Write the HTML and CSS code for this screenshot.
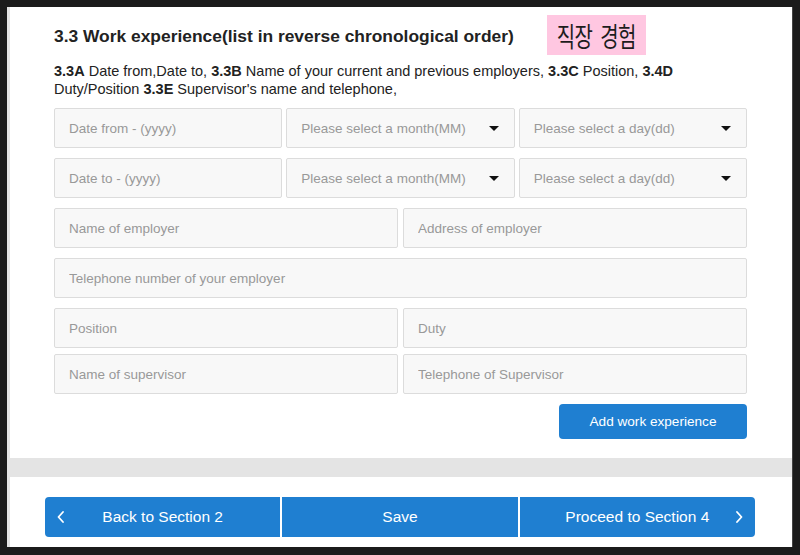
FILE: index.html
```html
<!DOCTYPE html>
<html lang="en">
<head>
<meta charset="utf-8">
<title>Work experience</title>
<link rel="stylesheet" href="styles.css">
</head>
<body>
<div class="frame">
  <div class="content">
    <div class="header">
      <h2 class="title">3.3 Work experience(list in reverse chronological order)</h2>
      <span class="tag"><span class="tag-text">직장 경험</span></span>
    </div>
    <p class="desc"><b>3.3A</b> Date from,Date to, <b>3.3B</b> Name of your current and previous employers, <b>3.3C</b> Position, <b>3.4D</b> Duty/Position <b>3.3E</b> Supervisor's name and telephone,</p>

    <div class="fields">
      <div class="row cols3">
        <input class="field" type="text" placeholder="Date from - (yyyy)">
        <div class="field select"><span>Please select a month(MM)</span><svg class="caret" viewBox="0 0 10 5" width="10" height="5"><polygon points="0,0 10,0 5,5" fill="#111"/></svg></div>
        <div class="field select"><span>Please select a day(dd)</span><svg class="caret" viewBox="0 0 10 5" width="10" height="5"><polygon points="0,0 10,0 5,5" fill="#111"/></svg></div>
      </div>
      <div class="row cols3">
        <input class="field" type="text" placeholder="Date to - (yyyy)">
        <div class="field select"><span>Please select a month(MM)</span><svg class="caret" viewBox="0 0 10 5" width="10" height="5"><polygon points="0,0 10,0 5,5" fill="#111"/></svg></div>
        <div class="field select"><span>Please select a day(dd)</span><svg class="caret" viewBox="0 0 10 5" width="10" height="5"><polygon points="0,0 10,0 5,5" fill="#111"/></svg></div>
      </div>
      <div class="row cols2">
        <input class="field" type="text" placeholder="Name of employer">
        <input class="field" type="text" placeholder="Address of employer">
      </div>
      <div class="row cols1">
        <input class="field" type="text" placeholder="Telephone number of your employer">
      </div>
      <div class="row cols2">
        <input class="field" type="text" placeholder="Position">
        <input class="field" type="text" placeholder="Duty">
      </div>
      <div class="row cols2 tight">
        <input class="field" type="text" placeholder="Name of supervisor">
        <input class="field" type="text" placeholder="Telephone of Supervisor">
      </div>
    </div>

    <div class="actions">
      <button class="btn-add" type="button">Add work experience</button>
    </div>
  </div>

  <div class="band"></div>

  <div class="footer">
    <button class="nav-btn first" type="button">
      <svg class="chev left" viewBox="0 0 7 12" width="7" height="12"><polyline points="6,1 1.5,6 6,11" fill="none" stroke="#fff" stroke-width="1.8" stroke-linecap="round" stroke-linejoin="round"/></svg>
      <span>Back to Section 2</span>
    </button>
    <button class="nav-btn" type="button"><span>Save</span></button>
    <button class="nav-btn last" type="button">
      <span>Proceed to Section 4</span>
      <svg class="chev right" viewBox="0 0 7 12" width="7" height="12"><polyline points="1,1 5.5,6 1,11" fill="none" stroke="#fff" stroke-width="1.8" stroke-linecap="round" stroke-linejoin="round"/></svg>
    </button>
  </div>
</div>
</body>
</html>
```

FILE: styles.css
```css
* { box-sizing: border-box; }

html, body {
  margin: 0;
  padding: 0;
  background: #1b1b1b;
  font-family: "Liberation Sans", Arial, sans-serif;
  color: #222;
}

.frame {
  margin: 7px 0 0 7px;
  width: 786px;
  height: 540px;
  background: #fff;
  border-left: 3px solid #e3e3e3;
  border-right: 1px solid #444;
}

.content {
  padding: 8px 45px 0 44px;
}

.header {
  display: flex;
  align-items: center;
  height: 40px;
}

.title {
  margin: 2px 0 0;
  font-size: 17.4px;
  font-weight: bold;
  color: #222;
}

.tag {
  margin-left: 33px;
  width: 99px;
  height: 40px;
  background: #ffc7e1;
  display: flex;
  align-items: center;
  justify-content: center;
}

.tag-text {
  display: inline-block;
  font-family: "Noto Sans CJK KR", sans-serif;
  font-size: 27px;
  line-height: 1;
  color: #1d1d1d;
  white-space: nowrap;
  word-spacing: 6px;
  letter-spacing: -1px;
  transform: scaleX(0.74);
}

.desc {
  margin: 7px 0 0;
  font-size: 14.5px;
  line-height: 18px;
  color: #222;
}

.desc b { font-weight: bold; }

.fields {
  margin-top: 10px;
  display: flex;
  flex-direction: column;
  gap: 10px;
}

.row {
  display: grid;
  height: 40px;
}

.row.tight { margin-top: -4px; }

.cols3 { grid-template-columns: 1fr 1fr 1fr; column-gap: 4px; }
.cols2 { grid-template-columns: 1fr 1fr; column-gap: 5px; }
.cols1 { grid-template-columns: 1fr; }

.field {
  height: 40px;
  width: 100%;
  margin: 0;
  border: 1px solid #dcdcdc;
  border-radius: 2px;
  background: #f8f8f8;
  padding: 0 15px 0 14px;
  font-family: "Liberation Sans", Arial, sans-serif;
  font-size: 13.5px;
  color: #999;
  outline: none;
}

.field::placeholder { color: #999; }

.select {
  display: flex;
  align-items: center;
  justify-content: space-between;
}

.caret { display: block; flex: none; }

.actions {
  display: flex;
  justify-content: flex-end;
  margin-top: 10px;
}

.btn-add {
  width: 188px;
  height: 35px;
  border: none;
  border-radius: 4px;
  background: #1f7fd1;
  color: #fff;
  font-family: "Liberation Sans", Arial, sans-serif;
  font-size: 13.6px;
  padding: 0;
  cursor: pointer;
}

.band {
  margin-top: 19px;
  height: 19px;
  background: #e4e4e4;
}

.footer {
  display: flex;
  gap: 2px;
  padding: 20px 37px 10px 35px;
}

.nav-btn {
  position: relative;
  flex: 1;
  height: 40px;
  border: none;
  background: #1f7fd1;
  color: #fff;
  font-family: "Liberation Sans", Arial, sans-serif;
  font-size: 15.5px;
  padding: 0;
  display: flex;
  align-items: center;
  justify-content: center;
  cursor: pointer;
}

.nav-btn.first { border-radius: 4px 0 0 4px; }
.nav-btn.last { border-radius: 0 4px 4px 0; }

.chev {
  position: absolute;
  top: 14px;
}

.chev.left { left: 12px; }
.chev.right { right: 12px; }
```
